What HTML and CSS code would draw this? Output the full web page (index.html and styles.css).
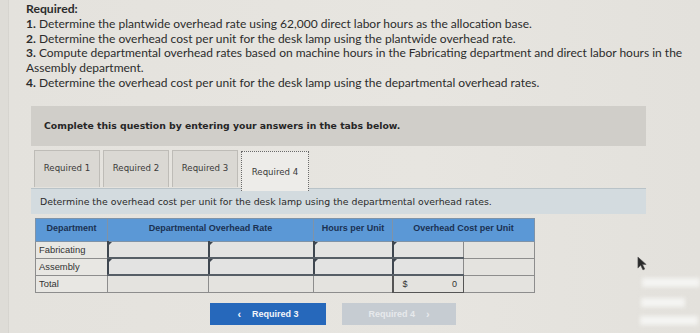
FILE: index.html
```html
<!DOCTYPE html>
<html lang="en">
<head>
<meta charset="utf-8">
<title>Required</title>
<link rel="stylesheet" href="styles.css">
</head>
<body>
<div class="page">
  <section class="prompt">
    <div class="prompt-title">Required:</div>
    <p><b>1.</b> Determine the plantwide overhead rate using 62,000 direct labor hours as the allocation base.</p>
    <p><b>2.</b> Determine the overhead cost per unit for the desk lamp using the plantwide overhead rate.</p>
    <p><b>3.</b> Compute departmental overhead rates based on machine hours in the Fabricating department and direct labor hours in the Assembly department.</p>
    <p><b>4.</b> Determine the overhead cost per unit for the desk lamp using the departmental overhead rates.</p>
  </section>

  <section class="work">
    <div class="notice">Complete this question by entering your answers in the tabs below.</div>

    <div class="tabs">
      <div class="tab">Required 1</div>
      <div class="tab">Required 2</div>
      <div class="tab">Required 3</div>
      <div class="tab active">Required 4</div>
    </div>

    <div class="instructions">Determine the overhead cost per unit for the desk lamp using the departmental overhead rates.</div>

    <table class="grid">
      <colgroup>
        <col class="c-dept">
        <col class="c-rate1">
        <col class="c-rate2">
        <col class="c-hours">
        <col class="c-cost">
        <col class="c-blank">
      </colgroup>
      <thead>
        <tr>
          <th>Department</th>
          <th colspan="2">Departmental Overhead Rate</th>
          <th>Hours per Unit</th>
          <th colspan="2">Overhead Cost per Unit</th>
        </tr>
      </thead>
      <tbody>
        <tr>
          <td class="label">Fabricating</td>
          <td class="input"></td>
          <td class="input"></td>
          <td class="input"></td>
          <td class="input"></td>
          <td></td>
        </tr>
        <tr>
          <td class="label">Assembly</td>
          <td class="input"></td>
          <td class="input"></td>
          <td class="input"></td>
          <td class="input"></td>
          <td></td>
        </tr>
        <tr class="total">
          <td class="label">Total</td>
          <td></td>
          <td></td>
          <td></td>
          <td class="sum"><span class="cur">$</span><span class="amt">0</span></td>
          <td></td>
        </tr>
      </tbody>
    </table>

    <div class="nav">
      <button class="btn prev" type="button"><span class="chev">&lsaquo;</span> Required 3</button>
      <button class="btn next" type="button" disabled>Required 4 <span class="chev">&rsaquo;</span></button>
    </div>
  </section>

  <aside class="side">
    <svg class="pointer" width="11" height="15" viewBox="0 0 12 16">
      <path d="M1 1 L1 13 L4 10 L6.5 15 L8.5 14 L6 9 L10 9 Z" fill="#2a2a2a" stroke="#555" stroke-width="0.6"/>
    </svg>
    <div class="glow g1"></div>
    <div class="glow g2"></div>
    <div class="glow g3"></div>
  </aside>
</div>
</body>
</html>
```

FILE: styles.css
```css
html, body {
  margin: 0;
  padding: 0;
}

body {
  width: 700px;
  height: 333px;
  overflow: hidden;
  background: linear-gradient(90deg, #dedcd7 0, #dedcd7 8px, #c9c7c2 8px, #e4e2dd 9px, #e7e5e0 60%, #e3e1dc 100%);
  color: #2b2b2b;
}

.page {
  position: relative;
  height: 333px;
  padding: 2px 0 0 26px;
  box-sizing: border-box;
}

/* question text */
.prompt {
  font-family: "Lato", "Open Sans", sans-serif;
  font-size: 12px;
  line-height: 14.8px;
  color: #2c2c2c;
}

.prompt-title {
  font-weight: 700;
  font-size: 12.2px;
}

.prompt p {
  margin: 0;
  width: 672px;
}

.prompt b {
  font-weight: 700;
}

/* answer area */
.work {
  margin: 15px 0 0 5px;
  width: 615px;
}

.notice {
  height: 40px;
  background: #d0cec9;
  font-family: "DejaVu Sans", Verdana, sans-serif;
  font-weight: 700;
  font-size: 9.3px;
  color: #262626;
  padding-left: 13px;
  display: flex;
  align-items: center;
  box-sizing: border-box;
}

.tabs {
  display: flex;
  gap: 3px;
  margin: 4px 0 0 3px;
  align-items: flex-start;
  height: 38px;
}

.tab {
  width: 66px;
  height: 37px;
  box-sizing: border-box;
  background: #dad8d3;
  border: 1px solid #bebcb7;
  border-bottom: none;
  font-family: "DejaVu Sans", Verdana, sans-serif;
  font-size: 8.6px;
  color: #3a3a3a;
  display: flex;
  align-items: center;
  justify-content: center;
  padding-bottom: 2px;
}

.tab.active {
  width: 68px;
  height: 40px;
  margin-top: 1px;
  background: #edece9;
  border: 1px dotted #6a6a6a;
  border-bottom: none;
  padding-bottom: 0;
  padding-top: 2px;
  position: relative;
  z-index: 1;
}

.instructions {
  height: 26px;
  background: #d3dbdf;
  border-top: 1px solid #b9c3c8;
  box-sizing: border-box;
  font-family: "DejaVu Sans", Verdana, sans-serif;
  font-size: 9.35px;
  color: #2a2a2a;
  padding-left: 9px;
  display: flex;
  align-items: center;
}

/* data table */
.grid {
  margin: 4px 0 0 4px;
  border-collapse: collapse;
  font-family: "Liberation Sans", Arial, sans-serif;
  font-size: 9px;
  table-layout: fixed;
  width: 499px;
}

.c-dept { width: 72px; }
.c-rate1 { width: 101px; }
.c-rate2 { width: 105px; }
.c-hours { width: 79px; }
.c-cost { width: 71px; }
.c-blank { width: 71px; }

.grid th {
  background: #5b98d6;
  color: #1a3152;
  font-weight: 700;
  height: 23px;
  border: 1px solid #7f93a8;
  padding: 0 0 3px;
  box-sizing: border-box;
  vertical-align: middle;
}

.grid td {
  height: 17px;
  border: 1px solid #8d8d8d;
  padding: 0;
  box-sizing: border-box;
  background: #e4e3df;
}

.grid td.label {
  font-size: 9.4px;
  color: #333;
  padding-left: 3px;
  background: #e8e7e3;
}

.grid td.input {
  position: relative;
  background: #e3e3e2;
  border: 1px solid #8a8a8a;
  border-left: 2px solid #3f4750;
  border-bottom: 2px solid #565e66;
}

.grid td.input::before {
  content: "";
  position: absolute;
  left: 0;
  top: 0;
  border-top: 3px solid #3f4750;
  border-right: 3px solid transparent;
}

.grid tr.total td.sum {
  position: relative;
  border: 1px solid #555;
  border-left: 2px solid #555;
  font-size: 9px;
  color: #333;
}

.sum .cur {
  position: absolute;
  left: 9px;
  top: 3px;
}

.sum .amt {
  position: absolute;
  right: 6px;
  top: 3px;
}

/* navigation */
.nav {
  display: flex;
  gap: 16px;
  margin: 10px 0 0 179px;
}

.btn {
  width: 116px;
  height: 22px;
  border: none;
  font-family: "Liberation Sans", Arial, sans-serif;
  font-weight: 700;
  font-size: 9px;
  padding: 0;
  display: flex;
  align-items: center;
  justify-content: center;
  gap: 11px;
}

.btn.prev {
  background: #2668bb;
  color: #f2f5fa;
}

.btn.next {
  width: 114px;
  background: #c6ccd2;
  color: #e6e9ec;
}

.chev {
  font-size: 11px;
  font-weight: 700;
}

/* right margin of the window */
.side .pointer {
  position: absolute;
  left: 637px;
  top: 256px;
}

.glow {
  position: absolute;
  left: 642px;
  width: 58px;
  height: 9px;
  background: #f4f4f2;
  filter: blur(2px);
}

.g1 { top: 278px; }
.g2 { top: 298px; width: 44px; left: 641px; }
.g3 { top: 316px; left: 640px; }
```
